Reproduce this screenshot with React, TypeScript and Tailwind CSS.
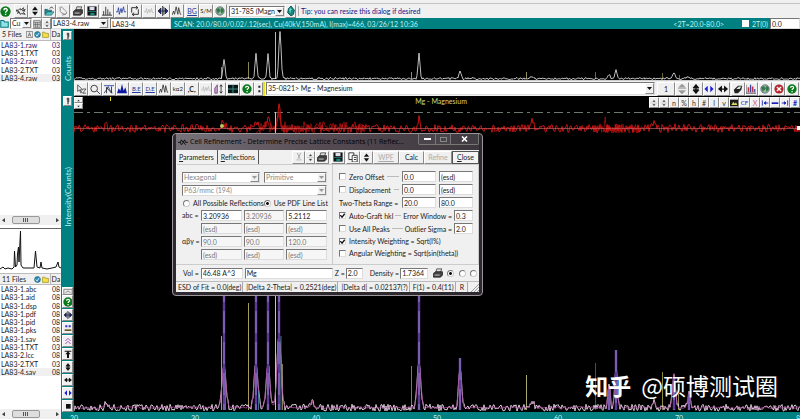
import React from 'react';
import clsx from 'clsx';

type Peak = { x: number; h: number; w: number };
type Line = { x: number; top: number; color: string };

// Small seeded generator so the patterns stay the same between renders
const createRandom = (seed: number) => {
  let s = seed;
  return () => {
    s = (s * 16807) % 2147483647;
    return s / 2147483647;
  };
};

const tracePath = (width: number, base: number, noise: number, peaks: Peak[], seed: number) => {
  const random = createRandom(seed);
  const points: string[] = [];
  for (let x = 0; x <= width; x += 1) {
    const signal = peaks.reduce((sum, p) => sum + p.h * Math.exp(-(((x - p.x) / p.w) ** 2)), 0);
    const y = Math.max(1, base - signal - (random() - 0.3) * noise);
    points.push(`${x},${y.toFixed(1)}`);
  }
  return `M${points.join('L')}`;
};

const overviewPeaks: Peak[] = [
  { x: 150, h: 20, w: 1.5 },
  { x: 182, h: 26, w: 1.3 },
  { x: 194, h: 24, w: 1.3 },
  { x: 206, h: 48, w: 1.6 },
  { x: 345, h: 25, w: 1.3 },
  { x: 386, h: 8, w: 1.6 },
  { x: 458, h: 2, w: 2 },
  { x: 535, h: 4, w: 1.6 },
  { x: 542, h: 9, w: 1.5 },
  { x: 600, h: 5, w: 1.8 },
  { x: 614, h: 2, w: 2 },
];

const overviewLines: Line[] = [
  { x: 147, top: 38, color: '#8f8c5a' },
  { x: 174, top: 33, color: '#8a8650' },
  { x: 201, top: 3, color: '#c9b98a' },
  { x: 337, top: 43, color: '#8f8c5a' },
  { x: 452, top: 43, color: '#8f8c5a' },
  { x: 521, top: 43, color: '#6b6838' },
  { x: 588, top: 44, color: '#6b6838' },
  { x: 605, top: 46, color: '#6b6838' },
];

const patternPeaks: Peak[] = [
  { x: 32, h: 4, w: 2 },
  { x: 150, h: 45, w: 2.6 },
  { x: 182, h: 45, w: 2.6 },
  { x: 194, h: 45, w: 2.6 },
  { x: 205, h: 75, w: 2.8 },
  { x: 238, h: 7, w: 1.5 },
  { x: 345, h: 45, w: 2.5 },
  { x: 386, h: 42, w: 2 },
  { x: 458, h: 7, w: 2.5 },
  { x: 535, h: 22, w: 1.8 },
  { x: 542, h: 42, w: 1.8 },
  { x: 580, h: 6, w: 2 },
  { x: 600, h: 34, w: 2 },
  { x: 615, h: 15, w: 1.8 },
];

const residualPeaks: Peak[] = [
  { x: 32, h: 7, w: 1 },
  { x: 149, h: 5, w: 3 },
  { x: 182, h: 7, w: 2 },
  { x: 194, h: 10, w: 2 },
  { x: 205, h: 26, w: 1.4 },
  { x: 345, h: 12, w: 1.5 },
  { x: 458, h: 8, w: 2.5 },
  { x: 542, h: 6, w: 1 },
  { x: 580, h: 7, w: 2.5 },
  { x: 600, h: 3, w: 2 },
];

const referenceLines: Line[] = [
  { x: 147, top: 240, color: '#c08a86' },
  { x: 174, top: 207, color: '#a89a58' },
  { x: 201, top: 16, color: '#d8c878' },
  { x: 208, top: 268, color: '#8b7a5a' },
  { x: 337, top: 270, color: '#7d7a6a' },
  { x: 452, top: 279, color: '#a8a870' },
  { x: 521, top: 267, color: '#55502a' },
  { x: 588, top: 276, color: '#8d8a3c' },
  { x: 604, top: 298, color: '#8d8a3c' },
  { x: 699, top: 309, color: '#8d6a3c' },
];

const fittedLines = [
  { x: 150, top: 60 },
  { x: 182, top: 60 },
  { x: 194, top: 60 },
  { x: 205, top: 60 },
  { x: 345, top: 60 },
  { x: 386, top: 262 },
  { x: 535, top: 294 },
  { x: 542, top: 254 },
  { x: 600, top: 282 },
  { x: 615, top: 298 },
];

const overviewTrace = tracePath(726, 50, 2, overviewPeaks, 41);
const patternTrace = tracePath(726, 313, 7, patternPeaks, 97);
const calculatedTrace = tracePath(726, 312, 2, patternPeaks, 12);
const residualTrace = tracePath(726, 34, 8, residualPeaks, 333);
const residualBurst = tracePath(110, 34, 12, [{ x: 23, h: 14, w: 2 }], 77);

const icons: Record<string, React.ReactNode> = {
  help: (
    <>
      <circle cx="6" cy="6" r="5.6" fill="#0b7a1c" />
      <path d="M4.2 4.6C4.3 2 8 2.2 7.9 4.5C7.8 5.8 6.1 5.8 6.1 7.3M6.1 8.4V9.8" fill="none" stroke="#fff" strokeWidth="1.5" />
    </>
  ),
  bird: <path d="M0 5h3l2-2 1 2 3-3-1 4 3-2-2 4 2 2-4-1-2 1-1-3-2 2 1-3H0z" fill="none" stroke="#222" />,
  sort: <path d="M6 0.500l3.500 4.500h-7zM6 11.500l3.500-4.500h-7z" fill="#111" />,
  open: (
    <>
      <path d="M1 10V4h3l1 1h4v2H4z" fill="#1b8c8c" stroke="#134" strokeWidth=".6" />
      <path d="M4 7h8l-3 4H1z" fill="#4cc7c7" stroke="#134" strokeWidth=".6" />
      <path d="M7 3c1-2 3-2 4 0" fill="none" stroke="#222" />
    </>
  ),
  eraser: <path d="M2 2c3-2 4 1 6 3s3 2 2 4-4 1-5 2M2 2c2 2-1 4 2 6s5 2 6 1" fill="none" stroke="#777" />,
  printer: (
    <>
      <path d="M3.500 5l1-4h6l-1.500 4z" fill="#ddd" stroke="#222" strokeWidth=".8" />
      <path d="M0.500 6.500L3 4.500h8.500v4L9 11H0.500z" fill="#444" stroke="#111" strokeWidth=".8" />
      <path d="M2 8.500h6" stroke="#ddd" />
    </>
  ),
  save: (
    <>
      <path d="M0.500 0.500h11v11h-11z" fill="#111" />
      <path d="M3 1h6v4H3z" fill="#dde" />
      <path d="M1 6h10v1H1zM4 8h5v3H4z" fill="#178a80" />
    </>
  ),
  bars: <path d="M0 11h12M2 11V6M4.500 11V1M7 11V4M9.500 11V7" stroke="#222" fill="none" />,
  wave: <path d="M0 7h2l1-5 1 8 2-7 1 5 2-7 1 6h2" stroke="#223a9a" fill="none" />,
  swap: <path d="M2 8V2h7M7 0l2.500 2L7 4M10 4v6H3M5 8l-2.500 2L5 12" stroke="#111" fill="none" />,
  wavegray: <path d="M0 7h2l1-4 1 6 2-5 1 4 2-5 1 5h2" stroke="#bbb" fill="none" />,
  expand: <path d="M0 6l3.500-3.500v7zM12 6L8.500 2.500v7zM5.500 0v12M7 1v10M2 6h8" fill="#112a9a" stroke="#112" strokeWidth=".9" />,
  peaks: <path d="M0 11l2-5 1 4 2-9 2 9 1-8 2 8h1" stroke="#333" fill="none" />,
  globe: (
    <>
      <circle cx="6" cy="6" r="5" fill="#9cc9a4" stroke="#345" strokeWidth=".8" />
      <path d="M2 4l3-1 1 3-3 2zM7 3l3 1v3l-3 2M3 10l6-8" fill="#2a7d49" stroke="#465" strokeWidth=".8" />
    </>
  ),
  gem: (
    <>
      <path d="M6 0l4 5-1 5-3 2-4-4 1-5z" fill="#128a80" stroke="#044" />
      <path d="M5 2v6M7 4l-3 1" stroke="#7ff0e0" />
    </>
  ),
  table: <path d="M1 1h10v10H1zM1 4h10M4 4v7M7 4v7M1 7h10" fill="#ddd" stroke="#555" />,
  folder: <path d="M1 2h4l1 2h5v7H1z" fill="#f5e04a" stroke="#8a7a10" />,
  folderTeal: <path d="M1 2h4l1 2h5v7H1z" fill="#8ee5e5" stroke="#0a7a80" strokeWidth="1.400" />,
  check: (
    <>
      <circle cx="6" cy="6" r="5" fill="#2b8fc0" stroke="#155" />
      <path d="M3 6l2 3 4-6" stroke="#fff" fill="none" strokeWidth="1.300" />
    </>
  ),
  boxA: <path d="M.5 1h11v10H.5zM3.500 9.500L6 3l2.500 6.500M4.500 7h3" fill="none" stroke="#444" />,
  zoomPointer: <path d="M2 1v8l2-2 2 4 1-1-2-3h3zM8 6h4l-4 5h4" stroke="#333" fill="none" strokeWidth=".9" />,
  magnifier: <path d="M8.500 8.500L12 12M9 5.500A4 4 0 1 1 1 5.500A4 4 0 0 1 9 5.500" stroke="#333" fill="none" strokeWidth="1.100" />,
  markPeaks: (
    <>
      <path d="M0 2h12M0 11l3-4 2-4 2 4 3 4" stroke="#223a9a" fill="none" />
      <path d="M3 11V4l6 7V3" stroke="#222" fill="none" />
    </>
  ),
  fillPeaks: <path d="M0 11l2-6 2 3 2-8 2 8 2-4 2 7z" fill="#0e17a0" />,
  adjust: (
    <>
      <path d="M1 11V5l3-4v10z" fill="#c7a0d5" stroke="#747" />
      <path d="M8.500 1v10M7 3l1.500-2L10 3M7 9l1.500 2L10 9" stroke="#222" fill="none" />
    </>
  ),
  grid: (
    <>
      <path d="M0 1h12v10H0z" fill="#051818" />
      <path d="M6 1v10M0 6h12" stroke="#4b9c90" />
    </>
  ),
  grayVertical: <path d="M6 0l4 4H2zM6 12l4-4H2zM1 5.500h10" fill="#999" stroke="#aaa" />,
  vertical: <path d="M6 1l2.500 3h-5zM6 11l2.500-3h-5zM6 3v6M2.500 6h7" fill="#111" stroke="#111" strokeWidth="1.500" />,
  blueSplit: <path d="M0.500 6l4-4v8zM11.500 6l-4-4v8z" fill="#1a20d8" />,
  horizontal: <path d="M1 6l3-2.500v5zM11 6L8 3.500v5zM3 6h6" fill="#111" stroke="#111" strokeWidth="1.500" />,
  eraserBlock: (
    <>
      <path d="M1 7l5-5h5l-1 5-4 4H2z" fill="#222" />
      <path d="M4 6l3-3h3L8 6z" fill="#e3e3e3" />
    </>
  ),
  colorBars: (
    <>
      <path d="M0 1v10h12" stroke="#334" fill="none" />
      <path d="M3 10V4M8 10V3" stroke="#c0334a" strokeWidth="2" />
      <path d="M5.500 10V1M10.500 10V6" stroke="#334a9a" strokeWidth="1.500" />
    </>
  ),
  stop: (
    <>
      <circle cx="6" cy="6" r="5.500" fill="#b3262c" />
      <path d="M3.500 3.500l5 5M8.500 3.500l-5 5" stroke="#fff" strokeWidth="1.600" />
    </>
  ),
  cut: <path d="M4 1l3 7M8 1L5 8M3 9.500h2.500M6.500 9.500H9" stroke="#aaa" fill="none" strokeWidth="1.200" />,
  copy: (
    <>
      <path d="M1 1h6v8H1z" fill="#fff" stroke="#222" />
      <path d="M5 4h6v8H5zM7 6.500h3M7 9h3" fill="#fff" stroke="#222" />
    </>
  ),
  spinner: <path d="M6 1.500l2 2.500h-4zM6 10.500l2-2.500h-4zM1 6h10" fill="#222" stroke="#999" strokeWidth=".5" />,
  up: <path d="M6 4l3 4h-6z" fill="#222" />,
  down: <path d="M6 8l3-4h-6z" fill="#222" />,
  dots: <path d="M5 1h3v3H5zM5 8h3v3H5z" fill="#222" />,
  pin: <path d="M6 1v10M4 3h4M5 6h3" stroke="#222" strokeWidth="1.600" fill="none" />,
  toTop: <path d="M1 1h10v1.500H1zM6 2l4 4.500H7.500V12h-3V6.500H2z" fill="#111" />,
  blueDots: (
    <>
      <path d="M2 2h3v3H2zM7 2h3v3H7z" fill="#2a2ad0" />
      <path d="M1 8h10v2.500H1z" fill="#665a20" />
    </>
  ),
  chevrons: <path d="M2 6l4-4 4 4M2 10.500l4-4 4 4" fill="none" stroke="#b04ac0" strokeWidth="1.500" />,
  square: <path d="M3 3h7v7H3z" fill="#111" />,
  small: <path d="M1 4h10v6H1zM3 8l3-2 3 2" fill="#eee" stroke="#777" />,
  image: (
    <>
      <path d="M0 1h12v10H0z" fill="#1a1a1a" />
      <path d="M2 9l3-5 2 3 2-2 2 4z" fill="#d8d855" />
    </>
  ),
  arrowLeft: <path d="M2 2v8M11 6H5M7 4L4.500 6 7 8z" stroke="#1a20b8" fill="#1a20b8" strokeWidth="1.300" />,
  dash: <path d="M1 5h10v2.500H1z" fill="#1a20b8" />,
  arrowRight: <path d="M10 2v8M1 6h6M5 4l2.500 2L5 8z" stroke="#1a20b8" fill="#1a20b8" strokeWidth="1.300" />,
};

const Icon: React.FC<{ name: string; className?: string }> = ({ name, className }) => (
  <svg viewBox="0 0 12 12" className={clsx('shrink-0', className ?? 'size-[10px]')} aria-hidden="true">
    {icons[name]}
  </svg>
);

const bevel = 'border border-t-white border-l-white border-r-[#8a8a8a] border-b-[#8a8a8a] bg-[#f0f0f0]';
const sunken = 'border border-t-[#777] border-l-[#777] border-r-[#ddd] border-b-[#ddd]';

const ToolButton: React.FC<{
  label: string;
  icon?: string;
  text?: string;
  iconClass?: string;
  className?: string;
}> = ({ label, icon, text, iconClass, className }) => (
  <button
    aria-label={label}
    className={clsx('flex items-center justify-center overflow-hidden', bevel, className ?? 'h-[14px] w-[14px]')}
  >
    {icon ? <Icon name={icon} className={iconClass} /> : text}
  </button>
);

const Dropdown: React.FC<{ label: string; value: string; disabled?: boolean; className?: string }> = ({
  label,
  value,
  disabled,
  className,
}) => (
  <div className={clsx('relative h-[11px] bg-white', sunken, className)}>
    <select
      aria-label={label}
      disabled={disabled}
      className={clsx(
        'block h-full w-full appearance-none bg-transparent pl-px leading-[9px] outline-none',
        disabled ? 'text-[#888]' : 'text-[#222]'
      )}
    >
      <option>{value}</option>
    </select>
    <span className={clsx('pointer-events-none absolute inset-y-0 right-0 flex w-[9px] items-center justify-center', bevel)}>
      <svg viewBox="0 0 5 3" className="w-[5px]">
        <path d="M0 0h5L2.500 3z" fill={disabled ? '#999' : '#111'} />
      </svg>
    </span>
  </div>
);

const Field: React.FC<{ label: string; value: string; muted?: boolean; className?: string }> = ({
  label,
  value,
  muted,
  className,
}) => (
  <input
    aria-label={label}
    defaultValue={value}
    className={clsx(
      'h-[11px] min-w-0 pl-px leading-[9px] outline-none',
      sunken,
      muted ? 'bg-[#f6f6f6] text-[#777]' : 'bg-white text-[#222]',
      className
    )}
  />
);

const Checkbox: React.FC<{ label: string; checked?: boolean }> = ({ label, checked }) => (
  <label className="flex items-center gap-[3px] whitespace-nowrap">
    <span className="relative flex">
      <input
        type="checkbox"
        defaultChecked={checked}
        className={clsx('peer size-[7px] appearance-none bg-white', sunken)}
      />
      <svg viewBox="0 0 8 8" className="pointer-events-none absolute inset-0 hidden peer-checked:block">
        <path d="M1.500 3.500l2 2.500 3-4" fill="none" stroke="#111" strokeWidth="1.500" />
      </svg>
    </span>
    {label}
  </label>
);

const Radio: React.FC<{ name: string; label: string; text?: string; checked?: boolean }> = ({
  name,
  label,
  text,
  checked,
}) => (
  <label className="flex items-center gap-[3px] whitespace-nowrap">
    <input
      type="radio"
      name={name}
      aria-label={label}
      defaultChecked={checked}
      className="size-[7px] appearance-none rounded-full border border-t-[#777] border-l-[#777] border-r-[#ccc] border-b-[#ccc] bg-white checked:bg-[radial-gradient(#111_35%,#fff_45%)]"
    />
    {text}
  </label>
);

const topIcons = [
  ['Preferences', 'bird'],
  ['Sort', 'sort'],
  ['Open', 'open'],
  ['Erase', 'eraser'],
];

const patternIcons = [
  ['Patterns', 'bars'],
  ['Smooth', 'wave'],
  ['Swap', 'swap'],
  ['Strip', 'wavegray'],
  ['Expand', 'expand'],
  ['Profile', 'peaks'],
];

const TopToolbar: React.FC = () => (
  <header className="bg-[#f0f0f0]">
    <div className="h-[4px] border-b border-[#c4c4c4]" />
    <div className="flex h-[14px] items-center">
      <Icon name="help" className="mr-[3px] size-[11px]" />
      {topIcons.map(([label, icon]) => (
        <ToolButton key={label} label={label} icon={icon} />
      ))}
      <div className="flex pl-px">
        <ToolButton label="Print" icon="printer" />
        <ToolButton label="Save" icon="save" />
      </div>
      <div className="flex pl-px">
        {patternIcons.map(([label, icon]) => (
          <ToolButton key={label} label={label} icon={icon} />
        ))}
      </div>
      <div className="flex pl-px">
        <ToolButton label="Background" text="BG" className="h-[14px] w-[14px] text-[#223a9a] underline" />
        <ToolButton label="Search match" text="S/M" className="h-[14px] w-[14px] text-[6px]" />
        <ToolButton label="Database" icon="globe" />
      </div>
      <Dropdown label="Phase" value="31-785 (Magne" className="ml-[2px] w-[56px]" />
      <ToolButton label="Minerals" icon="gem" className="h-[14px] w-[11px]" />
      <p className="ml-[2px] border-l border-[#aaa] pl-[2px] text-[#10108a]">Tip: you can resize this dialog if desired</p>
    </div>
  </header>
);

const ScanBar: React.FC = () => (
  <div className="flex h-[11px] items-center bg-[#008080]">
    <div className="flex h-full w-[171px] shrink-0 items-center bg-[#f0f0f0]">
      <Icon name="folderTeal" className="size-[9px]" />
      <Dropdown label="Anode" value="Cu" className="ml-px w-[22px]" />
      <ToolButton label="Table" icon="table" iconClass="size-[8px]" className="h-[11px] w-[10px]" />
      <ToolButton label="Step" icon="spinner" iconClass="size-[8px]" className="h-[11px] w-[9px]" />
      <Dropdown label="Scan file" value="LA83-4.raw" className="w-[58px]" />
      <Field label="Sample" value="LA83-4" className="ml-px flex-1" />
    </div>
    <p className="flex-1 pl-[3px] whitespace-nowrap text-[#bff0f0]">
      SCAN: 20.0/80.0/0.02/.12(sec), Cu(40kV,150mA), I(max)=466, 03/26/12 10:36
    </p>
    <p className="pr-[18px] text-[#bff0f0]">&lt;2T=20.0-80.0&gt;</p>
    <label className="flex items-center gap-[3px] pr-[2px] text-[#bff0f0]">
      <input type="checkbox" className="size-[7px] appearance-none bg-white" />
      2T(0)
    </label>
    <Field label="Two theta zero" value="0.0" className="w-[30px]" />
  </div>
);

const rawFiles = [
  { name: 'LA83-1.raw', date: '03', blue: true },
  { name: 'LA83-1.TXT', date: '03' },
  { name: 'LA83-2.raw', date: '03', blue: true },
  { name: 'LA83-2.TXT', date: '03' },
  { name: 'LA83-4.raw', date: '03', selected: true },
];

const resultFiles = [
  { name: 'LA83-1.abc', date: '08' },
  { name: 'LA83-1.aid', date: '08' },
  { name: 'LA83-1.dsp', date: '08' },
  { name: 'LA83-1.pdf', date: '08' },
  { name: 'LA83-1.pid', date: '08' },
  { name: 'LA83-1.pks', date: '08' },
  { name: 'LA83-1.sav', date: '08' },
  { name: 'LA83-1.TXT', date: '03' },
  { name: 'LA83-2.lcc', date: '08' },
  { name: 'LA83-2.TXT', date: '03' },
  { name: 'LA83-4.sav', date: '08', selected: true },
];

type FileRow = { name: string; date: string; blue?: boolean; selected?: boolean };

const FileTable: React.FC<{ title: string; files: FileRow[]; headerIcons: string[]; className: string }> = ({
  title,
  files,
  headerIcons,
  className,
}) => (
  <table className={clsx('w-full shrink-0 table-fixed', className)}>
    <thead>
      <tr className="h-[11px] bg-[#f0f0f0]">
        <th className="w-[50px] border-b border-[#bbb] p-0 font-normal">
          <div className="flex items-center pl-[2px]">
            <span className="flex-1 text-left whitespace-nowrap">{title}</span>
            {headerIcons.map((name) => (
              <Icon key={name} name={name} className="mr-px size-[7px]" />
            ))}
          </div>
        </th>
        <th className="border-b border-l border-[#bbb] p-0 pl-px text-left font-normal">Da</th>
      </tr>
    </thead>
    <tbody>
      {files.map((file) => (
        <tr
          key={file.name}
          className={clsx(file.selected && 'bg-[#f0f0f0]', file.blue ? 'text-[#22227a]' : 'text-[#222]')}
        >
          <td className="p-0 pl-px leading-[8px]">{file.name}</td>
          <td className="p-0 pl-[2px] leading-[8px]">{file.date}</td>
        </tr>
      ))}
    </tbody>
  </table>
);

const ScrollBar: React.FC = () => (
  <div className="flex h-[10px] shrink-0 items-center justify-between bg-[#f0f0f0] px-[2px]">
    <svg viewBox="0 0 4 6" className="w-[3px]"><path d="M4 0v6L0 3z" fill="#444" /></svg>
    <div className="mr-[10px] flex h-[8px] w-[28px] items-center justify-center gap-px rounded-[2px] border border-[#999] bg-[#dedede]">
      <span className="h-[4px] w-px bg-[#555]" />
      <span className="h-[4px] w-px bg-[#555]" />
      <span className="h-[4px] w-px bg-[#555]" />
    </div>
    <svg viewBox="0 0 4 6" className="w-[3px]"><path d="M0 0v6L4 3z" fill="#444" /></svg>
  </div>
);

const Sidebar: React.FC = () => (
  <aside className="flex w-[61px] shrink-0 flex-col overflow-hidden bg-white">
    <FileTable title="5 Files" files={rawFiles} headerIcons={['boxA', 'check', 'folder']} className="h-[53px]" />
    <div className="h-[133px] shrink-0" />
    <ScrollBar />
    <div className="mt-[3px] h-[45px] shrink-0 border-t border-[#666]">
      <svg viewBox="0 0 61 44" preserveAspectRatio="none" className="h-full w-full">
        <path
          d="M0 40L3 38L5 40L8 39L12 40L14 38L14.500 22L15.500 38L17 36L17.500 25L18.500 18L19 33L20.500 2L21 36L23 39L34 39L35.500 22L37 38L40 39L41 33L42 39L47 40L52 39L56 38L58 33L59 38L61 39"
          fill="none"
          stroke="#111"
        />
      </svg>
    </div>
    <FileTable title="11 Files" files={resultFiles} headerIcons={['check', 'folder']} className="h-[103px] border-t border-[#bbb]" />
    <div className="flex-1" />
    <ScrollBar />
  </aside>
);

const stripIcons = [
  ['Widen', 'expand'],
  ['Markers', 'blueDots'],
  ['Stack', 'chevrons'],
  ['Top', 'toTop'],
  ['Vertical', 'vertical'],
  ['Horizontal', 'horizontal'],
  ['Split', 'blueSplit'],
  ['Stop', 'square'],
];

const StripLabel: React.FC<{ text: string }> = ({ text }) => (
  <div className="flex min-h-0 flex-1 items-center justify-center">
    <span className="rotate-180 whitespace-nowrap [writing-mode:vertical-rl]">{text}</span>
  </div>
);

const AxisStrip: React.FC = () => (
  <div className="flex w-[13px] shrink-0 flex-col items-center bg-[#008080] pb-[7px] text-[8px] text-[#b8f0f0]">
    <div className="flex h-[67px] shrink-0 flex-col items-center pt-[2px]">
      <ToolButton label="Pin overview" icon="pin" iconClass="size-[8px]" className="h-[9px] w-[9px]" />
      <StripLabel text="Counts" />
    </div>
    <ToolButton label="Pin pattern" icon="pin" iconClass="size-[8px]" className="h-[10px] w-[9px]" />
    <StripLabel text="Intensity(Counts)" />
    <ToolButton label="Size" icon="small" className="h-[8px] w-[11px]" />
    <ToolButton label="Help" icon="help" className="h-[13px] w-[11px]" />
    {stripIcons.map(([label, icon]) => (
      <ToolButton key={label} label={label} icon={icon} iconClass="size-[8px]" className="mt-px h-[12px] w-[11px]" />
    ))}
  </div>
);

const leftTools = [
  ['Zoom pointer', 'zoomPointer'],
  ['Magnify', 'magnifier'],
  ['Mark peaks', 'markPeaks'],
  ['Fill peaks', 'fillPeaks'],
];

const rightTools = [
  ['Fit height', 'grayVertical'],
  ['Scale vertical', 'vertical'],
  ['Split', 'blueSplit'],
  ['Scale horizontal', 'horizontal'],
];

const rightActions = [
  ['Erase', 'eraserBlock'],
  ['Chart', 'colorBars'],
  ['World', 'globe'],
  ['Cancel', 'stop'],
  ['Help', 'help'],
];

const flexTool = 'h-[14px] flex-1';

const ChartToolbar: React.FC = () => (
  <div className="flex h-[16px] shrink-0 items-center border-t border-[#ccc] bg-[#f0f0f0]">
    <div className="flex w-[180px]">
      {leftTools.map(([label, icon]) => (
        <ToolButton key={label} label={label} icon={icon} className={flexTool} />
      ))}
      <ToolButton label="Background edit" text="B.E" className="h-[14px] flex-1 text-[6px] text-[#223a9a] underline" />
      <ToolButton label="Data edit" text="D.E" className="h-[14px] flex-1 text-[6px] text-[#223a9a] underline" />
      <ToolButton label="Profile" icon="peaks" className={flexTool} />
      <ToolButton label="K alpha" text="kα2" className="h-[14px] flex-1 text-[6px]" />
      <ToolButton label="Calibrate" text=",C," className="h-[14px] flex-1 font-bold" />
      <ToolButton label="Compare" icon="wavegray" className={flexTool} />
      <ToolButton label="Adjust" icon="adjust" className={flexTool} />
      <ToolButton label="Grid" icon="grid" className={flexTool} />
      <ToolButton label="Help" icon="help" className={flexTool} />
    </div>
    <ToolButton label="More" icon="dots" iconClass="size-[8px]" className="h-[14px] w-[9px]" />
    <span className="h-[14px] w-[2px] bg-[#e8e020]" />
    <Dropdown label="Reference pattern" value="35-0821> Mg - Magnesium" className="ml-px h-[13px] flex-1" />
    <ToolButton label="Count" text="1" className="ml-[2px] h-[14px] w-[18px]" />
    <div className="flex w-[55px]">
      {rightTools.map(([label, icon]) => (
        <ToolButton key={label} label={label} icon={icon} className={flexTool} />
      ))}
    </div>
    <div className="flex w-[70px] px-px">
      {rightActions.map(([label, icon]) => (
        <ToolButton key={label} label={label} icon={icon} className={flexTool} />
      ))}
    </div>
  </div>
);

const OverviewChart: React.FC = () => (
  <div className="h-[51px] shrink-0 bg-black">
    <svg viewBox="0 0 726 51" preserveAspectRatio="none" className="h-full w-full">
      {overviewLines.map((line) => (
        <path key={line.x} d={`M${line.x}.5 ${line.top}V50`} stroke={line.color} />
      ))}
      <path d={overviewTrace} fill="none" stroke="#eee" strokeWidth=".8" />
    </svg>
  </div>
);

const PatternChart: React.FC = () => (
  <svg viewBox="0 0 726 316" preserveAspectRatio="none" className="absolute inset-0 h-full w-full">
    <path d="M36.500 1v4" stroke="#e8e020" />
    <path d="M0 16.500H726" stroke="#6d786d" strokeDasharray="9 4 3 4" />
    <path d={residualTrace} fill="none" stroke="#c81414" />
    <path d={residualBurst} transform="translate(182 0)" fill="none" stroke="#b01010" strokeWidth=".8" />
    <path d={residualBurst} transform="translate(522 9) scale(.4 .75)" fill="none" stroke="#d81414" />
    <path d="M0 32.500H726" stroke="#c06060" strokeWidth=".7" />
    {referenceLines.map((line) => (
      <path key={line.x} d={`M${line.x}.5 ${line.top}V314`} stroke={line.color} />
    ))}
    <circle cx="148" cy="30" r="2" fill="#b8c860" />
    <path d={patternTrace} fill="none" stroke="#eadfe8" strokeWidth=".9" />
    <path d={calculatedTrace} fill="none" stroke="#a8489a" strokeWidth=".8" />
    {fittedLines.map((line) => (
      <g key={line.x}>
        <path d={`M${line.x} ${line.top}V314`} stroke="#5c3a98" strokeWidth="2.500" />
        <path d={`M${line.x} ${line.top}V314`} stroke="#9480cc" strokeDasharray="22 9" />
      </g>
    ))}
    <path d="M151.500 285V314M184.500 295V314M207 240V314" stroke="#4a90a8" strokeWidth=".8" />
    <path d="M723 30h3v4h-3z" fill="#fff" />
  </svg>
);

const miniButtons = ['n', '%', 'h', '#', 'l', 'v'];
const miniTool = 'h-[11px] w-[10px]';

const MainChart: React.FC = () => (
  <div className="relative min-h-0 flex-1 bg-black">
    <PatternChart />
    <div className="absolute top-px left-0 flex flex-col">
      <ToolButton label="Increase" icon="up" iconClass="size-[5px]" className="h-[6px] w-[9px]" />
      <ToolButton label="Decrease" icon="down" iconClass="size-[5px]" className="h-[6px] w-[9px]" />
    </div>
    <p className="absolute top-0 left-[47%] text-[#d8d878]">Mg - Magnesium</p>
    <div className="absolute top-px right-0 flex text-[#333]">
      <ToolButton label="Step left" icon="spinner" iconClass="size-[8px]" className={miniTool} />
      <ToolButton label="Step right" icon="spinner" iconClass="size-[8px]" className={miniTool} />
      {miniButtons.map((text) => (
        <ToolButton key={text} label={text} text={text} className={miniTool} />
      ))}
      <ToolButton label="Picture" icon="image" iconClass="size-[8px]" className={miniTool} />
      <ToolButton label="CF" text="CF" className="h-[11px] w-[11px] text-[6px] text-[#1a20b8]" />
      <ToolButton label="X" text="X" className="h-[11px] w-[10px] text-[#d06080]" />
      <ToolButton label="First" icon="arrowLeft" iconClass="size-[8px]" className={miniTool} />
      <ToolButton label="Flat" icon="dash" iconClass="size-[8px]" className={miniTool} />
      <ToolButton label="Last" icon="arrowRight" iconClass="size-[8px]" className={miniTool} />
      <ToolButton label="Lines" text="#" className="h-[11px] w-[10px] font-bold text-[#1a20b8]" />
    </div>
  </div>
);

const AngleAxis: React.FC = () => (
  <div className="flex h-[7px] shrink-0 justify-between bg-[#008080] pt-[2px] text-[#c8f0f0]">
    {[20, 30, 40, 50, 60, 70, 80].map((angle) => (
      <span key={angle} className="flex w-0 justify-center leading-[9px]">{angle}</span>
    ))}
  </div>
);

const latticeRows = [
  { label: 'abc =', values: ['3.20936', '3.20936', '5.2112'], muted: [false, true, false] },
  { label: '', values: ['(esd)', '(esd)', '(esd)'], muted: [true, true, true] },
  { label: 'αβγ =', values: ['90.0', '90.0', '120.0'], muted: [true, true, true] },
  { label: '', values: ['(esd)', '(esd)', '(esd)'], muted: [true, true, true] },
];

const LatticePanel: React.FC = () => (
  <div className="flex w-[156px] shrink-0 flex-col justify-between border-t border-r border-[#ccc] px-[5px] py-[4px]">
    <div className="flex gap-[4px] pt-[3px]">
      <Dropdown label="Crystal system" value="Hexagonal" disabled className="w-[78px]" />
      <Dropdown label="Centering" value="Primitive" disabled className="flex-1" />
    </div>
    <Dropdown label="Space group" value="P63/mmc (194)" disabled />
    <div className="flex justify-between px-px">
      <Radio name="source" label="All Possible Reflections" text="All Possible Reflections" />
      <Radio name="source" label="Use PDF Line List" text="Use PDF Line List" checked />
    </div>
    {latticeRows.map((row, index) => (
      <div key={index} className="flex gap-[2px]">
        <span className="w-[17px] whitespace-nowrap">{row.label}</span>
        {row.values.map((value, i) => (
          <Field key={i} label={`${row.label} ${i + 1}`} value={value} muted={row.muted[i]} className="w-0 flex-1" />
        ))}
      </div>
    ))}
  </div>
);

const Rule: React.FC = () => <span className="h-px flex-1 bg-[#bbb]" />;

const OptionsPanel: React.FC = () => (
  <div className="flex min-w-0 flex-1 flex-col justify-between border-t border-r border-[#ccc] py-[6px] pr-[5px] pl-[6px]">
    <div className="flex items-center gap-[3px]">
      <Checkbox label="Zero Offset" />
      <Rule />
      <Field label="Zero offset value" value="0.0" className="w-[34px]" />
      <Field label="Zero offset esd" value="(esd)" className="w-[34px]" />
    </div>
    <div className="flex items-center gap-[3px]">
      <Checkbox label="Displacement" />
      <Rule />
      <Field label="Displacement value" value="0.0" className="w-[34px]" />
      <Field label="Displacement esd" value="(esd)" className="w-[34px]" />
    </div>
    <div className="flex items-center gap-[3px]">
      <span className="flex-1 whitespace-nowrap">Two-Theta Range =</span>
      <Field label="Two-theta from" value="20.0" className="w-[34px]" />
      <Field label="Two-theta to" value="80.0" className="w-[34px]" />
    </div>
    <div className="flex items-center gap-[2px]">
      <Checkbox label="Auto-Graft hkl" checked />
      <Rule />
      <label className="flex items-center gap-[2px] whitespace-nowrap">
        Error Window =
        <Field label="Error Window" value="0.3" className="w-[19px]" />
      </label>
    </div>
    <div className="flex items-center gap-[2px]">
      <Checkbox label="Use All Peaks" />
      <Rule />
      <label className="flex items-center gap-[2px] whitespace-nowrap">
        Outlier Sigma =
        <Field label="Outlier Sigma" value="2.0" className="w-[19px]" />
      </label>
    </div>
    <Checkbox label="Intensity Weighting = Sqrt(I%)" checked />
    <Checkbox label="Angular Weighting = Sqrt(sin(theta))" />
  </div>
);

const DialogTabs: React.FC = () => (
  <div className="flex h-[14px] items-center">
    <button className="h-full border-r border-[#555] px-[3px]">
      <span className="underline">P</span>arameters
    </button>
    <button className="h-full border-r border-[#555] px-[3px]">
      <span className="underline">R</span>eflections
    </button>
    <div className="flex-1" />
    <ToolButton label="Cut" icon="cut" className="h-[13px] w-[13px]" />
    <ToolButton label="Step" icon="spinner" iconClass="size-[9px]" className="h-[13px] w-[10px]" />
    <ToolButton label="Print" icon="printer" className="h-[13px] w-[14px]" />
    <ToolButton label="Save" icon="save" className="ml-[2px] h-[13px] w-[14px]" />
    <ToolButton label="Copy" icon="copy" className="ml-px h-[13px] w-[14px]" />
    <ToolButton label="Sort" icon="sort" iconClass="size-[9px]" className="h-[13px] w-[13px]" />
    <ToolButton label="WPF" text="WPF" className="h-[13px] w-[26px] text-[#aaa] underline" />
    <ToolButton label="Calc" text="Calc" className="h-[13px] w-[25px]" />
    <ToolButton label="Refine" text="Refine" className="h-[13px] w-[28px] text-[#aaa]" />
    <button className="h-[13px] w-[27px] border border-[#555] bg-[#f4f4f4]">
      <span className="underline">C</span>lose
    </button>
  </div>
);

const statusItems = ['ESD of Fit = 0.0(deg)', '|Delta 2-Theta| = 0.2521(deg)', '|Delta d| = 0.02137(?)', 'F(1) = 0.4(11)'];

const RefinementDialog: React.FC = () => (
  <section
    role="dialog"
    aria-label="Cell Refinement"
    className="absolute top-[133px] left-[172px] w-[311px] rounded-[4px] border border-[#9a969c] bg-[#2e292e] px-[3px] pb-[3px]"
  >
    <div className="flex h-[16px] items-center bg-linear-to-r from-[#77727a] via-[#554a52] to-[#3c373c]">
      <svg viewBox="0 0 12 8" className="mx-[2px] w-[10px]">
        <path d="M0 4h3l1-3 2 3 2-3 1 3h3M3 4l1 3 3-3 2 3" fill="none" stroke="#111" strokeWidth="1.200" />
      </svg>
      <h1 className="flex-1 font-['Open_Sans',sans-serif] text-[7px] whitespace-nowrap text-black">
        Cell Refinement - Determine Precise Lattice Constants (11 Reflec...
      </h1>
      <div className="flex h-[11px] self-start rounded-b-[2px] border border-t-0 border-[#777]">
        <button aria-label="Minimize" className="flex w-[16px] items-center justify-center bg-[#4a454a]">
          <span className="h-[2px] w-[7px] bg-white" />
        </button>
        <button aria-label="Maximize" className="flex w-[16px] items-center justify-center border-x border-[#777] bg-[#4a454a]">
          <span className="h-[5px] w-[7px] border border-[#888]" />
        </button>
        <button aria-label="Close window" className="flex w-[27px] items-center justify-center bg-[#423d42]">
          <svg viewBox="0 0 7 6" className="w-[7px]">
            <path d="M1 0.500l5 5M6 0.500l-5 5" stroke="#fff" strokeWidth="1.600" />
          </svg>
        </button>
      </div>
    </div>
    <div className="bg-[#f0f0f0] text-[#222]">
      <DialogTabs />
      <div className="flex h-[100px] pl-px">
        <LatticePanel />
        <OptionsPanel />
      </div>
      <div className="flex h-[17px] items-center border-t border-[#ccc] pl-[7px]">
        <label className="flex items-center gap-[2px] whitespace-nowrap">
          Vol =
          <Field label="Volume" value="46.48 A^3" className="w-[42px]" />
        </label>
        <Field label="Formula" value="Mg" className="ml-[2px] w-[88px]" />
        <label className="ml-[2px] flex items-center gap-px whitespace-nowrap">
          Z =
          <Field label="Z" value="2.0" className="w-[17px]" />
        </label>
        <label className="ml-[7px] flex items-center gap-px whitespace-nowrap">
          Density =
          <Field label="Density" value="1.7364" className="w-[28px]" />
        </label>
        <div className="flex flex-1 items-center justify-around pl-[3px]">
          <Icon name="printer" />
          <Radio name="output" label="Output one" checked />
          <Radio name="output" label="Output two" />
          <Radio name="output" label="Output three" />
        </div>
      </div>
      <div className="flex h-[11px] items-center gap-px border-t border-[#bbb] leading-[10px]">
        {statusItems.map((item) => (
          <span key={item} className="flex-auto border-r border-[#aaa] pl-[2px] whitespace-nowrap">
            {item}
          </span>
        ))}
        <span className="border-r border-[#aaa] px-[3px]">R</span>
        <svg viewBox="0 0 10 10" className="w-[10px] shrink-0">
          <path d="M2 10l8-8M5 10l5-5M8 10l2-2" stroke="#999" />
        </svg>
      </div>
    </div>
  </section>
);

const App: React.FC = () => {
  return (
    <div className="relative flex h-screen flex-col overflow-hidden bg-[#f0f0f0] font-['Lato','Liberation_Sans',sans-serif] text-[7px] leading-[10px] text-[#222]">
      <TopToolbar />
      <ScanBar />
      <div className="flex min-h-0 flex-1">
        <Sidebar />
        <AxisStrip />
        <main className="flex min-w-0 flex-1 flex-col">
          <OverviewChart />
          <ChartToolbar />
          <MainChart />
          <AngleAxis />
        </main>
      </div>
      <RefinementDialog />
      <p className="absolute right-[22px] bottom-[20px] flex items-baseline gap-[10px] font-['Noto_Sans_CJK_SC',sans-serif] text-[23px] leading-[28px] whitespace-nowrap text-white">
        <span className="font-bold">知乎</span>
        <span>@硕博测试圈</span>
      </p>
    </div>
  );
};

export default App;
